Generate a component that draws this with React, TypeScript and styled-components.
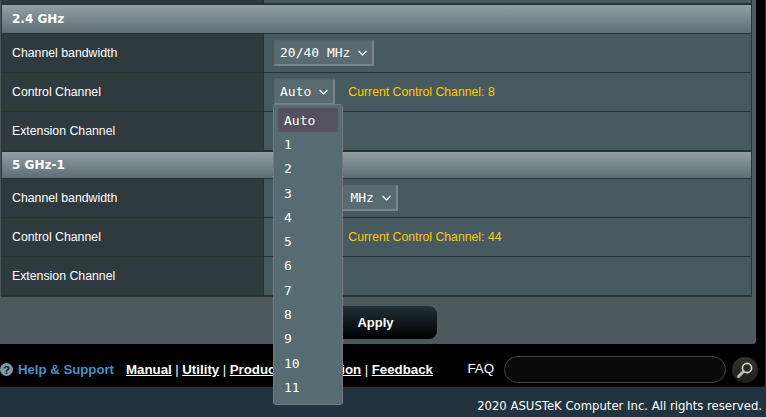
import React from 'react';
import styled, { createGlobalStyle } from 'styled-components';

const GlobalStyle = createGlobalStyle`
  html, body {
    margin: 0;
    padding: 0;
    height: 417px;
    overflow: hidden;
    background: #21333e;
  }
  * { box-sizing: border-box; }
`;

const Page = styled.div`
  width: 766px;
  height: 417px;
  display: flex;
  flex-direction: column;
  position: relative;
  overflow: hidden;
  background: linear-gradient(#1f2b33, #21333e 6px);
  font-family: "Liberation Sans", Arial, sans-serif;
`;

const Frame = styled.div`
  width: 765px;
  height: 387px;
  flex-shrink: 0;
  background: #000;
  border-radius: 0 0 4px 0;
  box-shadow: 1px 0 0 #2a3238, 0 1px 0 #2a3238;
`;

const Panel = styled.div`
  width: 756px;
  height: 344px;
  background: #4d595d;
  border-radius: 0 0 3px 0;
  padding-left: 1px;
  display: flex;
  flex-direction: column;
`;

const Table = styled.div`
  width: 751px;
  display: flex;
  flex-direction: column;
  border-left: 1px solid #2a3236;
  border-right: 1px solid #2a3236;
  border-bottom: 1px solid #2a3236;
`;

const Row = styled.div<{ $height?: number }>`
  height: ${p => p.$height ?? 39}px;
  display: grid;
  grid-template-columns: 262px 1fr;
  border-bottom: 1px solid #2a3236;
`;

const Label = styled.div`
  background: #2f3a3f;
  border-right: 1px solid #2a3236;
  display: flex;
  align-items: center;
  padding-left: 10px;
  color: #fff;
  font-size: 12.3px;
`;

const Value = styled.div`
  background: #475a5f;
  display: flex;
  align-items: center;
  padding-left: 10px;
  gap: 13px;
`;

const SectionHeader = styled.div<{ $height: number }>`
  height: ${p => p.$height}px;
  background: linear-gradient(#92a0a5, #5f6e74);
  border-bottom: 1px solid #2a3236;
  border-top: 1px solid #2a3236;
  display: flex;
  align-items: center;
  padding-left: 10px;
  color: #fff;
  font-family: "DejaVu Sans", Verdana, sans-serif;
  font-size: 12px;
  font-weight: bold;
`;

const Select = styled.div`
  height: 26px;
  display: flex;
  align-items: center;
  gap: 8px;
  padding: 0 5px 0 5px;
  background: #576b70;
  border-top: 1px solid #5b6468;
  border-left: 1px solid #5b6468;
  border-right: 2px solid #7d8487;
  border-bottom: 2px solid #7d8487;
  color: #fff;
  font-family: "DejaVu Sans Mono", monospace;
  font-size: 13px;
`;

const CurrentChannel = styled.span`
  color: #ffcc00;
  font-size: 12.25px;
`;

const ApplyRow = styled.div`
  width: 752px;
  display: flex;
  justify-content: center;
  padding-top: 9px;
`;

const ApplyButton = styled.div`
  width: 120px;
  height: 33px;
  padding-right: 3px;
  border-radius: 8px;
  background: linear-gradient(#223038, #000);
  color: #fff;
  font-size: 13px;
  font-weight: bold;
  display: flex;
  align-items: center;
  justify-content: center;
`;

const FooterBar = styled.div`
  height: 43px;
  display: flex;
  align-items: center;
  position: relative;
  padding: 8px 7px 0 0;
`;

const HelpIcon = styled.span`
  width: 13px;
  height: 13px;
  border-radius: 50%;
  background: #7f9aa6;
  color: #12191d;
  font-size: 11px;
  font-weight: bold;
  display: flex;
  align-items: center;
  justify-content: center;
  margin-right: 5px;
  flex-shrink: 0;
`;

const HelpText = styled.span`
  color: #4a8fc4;
  font-size: 13.2px;
  font-weight: bold;
  margin-right: 12px;
  white-space: nowrap;
`;

const Links = styled.div`
  color: #fff;
  font-size: 13.3px;
  white-space: nowrap;
  display: flex;
  gap: 3.5px;
`;

const FooterLink = styled.a`
  color: #fff;
  font-weight: bold;
  text-decoration: underline;
`;

const Faq = styled.span`
  color: #fff;
  font-size: 13.3px;
  margin-left: auto;
  margin-right: 10px;
  margin-top: -3px;
`;

const SearchInput = styled.div`
  width: 222px;
  height: 27px;
  border-radius: 14px;
  border: 1px solid #444;
  background: #0a0a0a;
  margin-right: 6px;
`;

const SearchButton = styled.div`
  width: 26px;
  height: 26px;
  border-radius: 50%;
  background: linear-gradient(#343530, #1c1c1a);
  display: flex;
  align-items: center;
  justify-content: center;
`;

const Copyright = styled.div`
  flex: 1;
  display: flex;
  align-items: center;
  justify-content: flex-end;
  padding: 8px 4px 0 0;
  color: #fff;
  font-family: "DejaVu Sans", Verdana, sans-serif;
  font-size: 11.66px;
`;

const Menu = styled.div`
  position: absolute;
  left: 273px;
  top: 104px;
  width: 70px;
  height: 301px;
  background: #566b72;
  border: 1px solid #747c80;
  border-radius: 3px;
  padding: 3px 4px;
  display: flex;
  flex-direction: column;
`;

const MenuItem = styled.div<{ $active?: boolean }>`
  height: 24.3px;
  flex-shrink: 0;
  display: flex;
  align-items: center;
  padding-left: 6px;
  border-radius: 2px;
  color: #fff;
  font-family: "DejaVu Sans Mono", monospace;
  font-size: 13px;
  background: ${p => (p.$active ? '#54525f' : 'transparent')};
`;

const Chevron = () => (
  <svg width="9" height="6" viewBox="0 0 9 6" fill="none">
    <path d="M0.5 1 L4.5 5 L8.5 1" stroke="#fff" strokeWidth="1.2" />
  </svg>
);

const Magnifier = () => (
  <svg width="18" height="18" viewBox="0 0 18 18" fill="none">
    <circle cx="11" cy="7" r="4.6" stroke="#d4d4d0" strokeWidth="1.7" />
    <path d="M7.5 10.5 L2.5 15.5" stroke="#b8b8b4" strokeWidth="3" strokeLinecap="round" />
  </svg>
);

const channels = ['Auto', '1', '2', '3', '4', '5', '6', '7', '8', '9', '10', '11'];

const bandRows = (bandwidth: string, current: string) => (
  <>
    <Row>
      <Label>Channel bandwidth</Label>
      <Value>
        <Select>{bandwidth}<Chevron /></Select>
      </Value>
    </Row>
    <Row>
      <Label>Control Channel</Label>
      <Value>
        <Select>Auto<Chevron /></Select>
        <CurrentChannel>Current Control Channel: {current}</CurrentChannel>
      </Value>
    </Row>
    <Row>
      <Label>Extension Channel</Label>
      <Value />
    </Row>
  </>
);

const App = () => {
  return (
    <Page>
      <GlobalStyle />
      <Frame>
        <Panel>
          <Table>
            <Row $height={4}>
              <Label />
              <Value />
            </Row>
            <SectionHeader $height={30}>2.4 GHz</SectionHeader>
            {bandRows('20/40 MHz', '8')}
            <SectionHeader $height={28}>5 GHz-1</SectionHeader>
            {bandRows('20/40/80 MHz', '44')}
          </Table>
          <ApplyRow>
            <ApplyButton>Apply</ApplyButton>
          </ApplyRow>
        </Panel>
        <FooterBar>
          <HelpIcon>?</HelpIcon>
          <HelpText>Help &amp; Support</HelpText>
          <Links>
            <FooterLink>Manual</FooterLink>|
            <FooterLink>Utility</FooterLink>|
            <FooterLink>Product Registration</FooterLink>|
            <FooterLink>Feedback</FooterLink>
          </Links>
          <Faq>FAQ</Faq>
          <SearchInput />
          <SearchButton><Magnifier /></SearchButton>
        </FooterBar>
      </Frame>
      <Copyright>2020 ASUSTeK Computer Inc. All rights reserved.</Copyright>
      <Menu>
        {channels.map((c, i) => (
          <MenuItem key={c} $active={i === 0}>{c}</MenuItem>
        ))}
      </Menu>
    </Page>
  );
};

export default App;
